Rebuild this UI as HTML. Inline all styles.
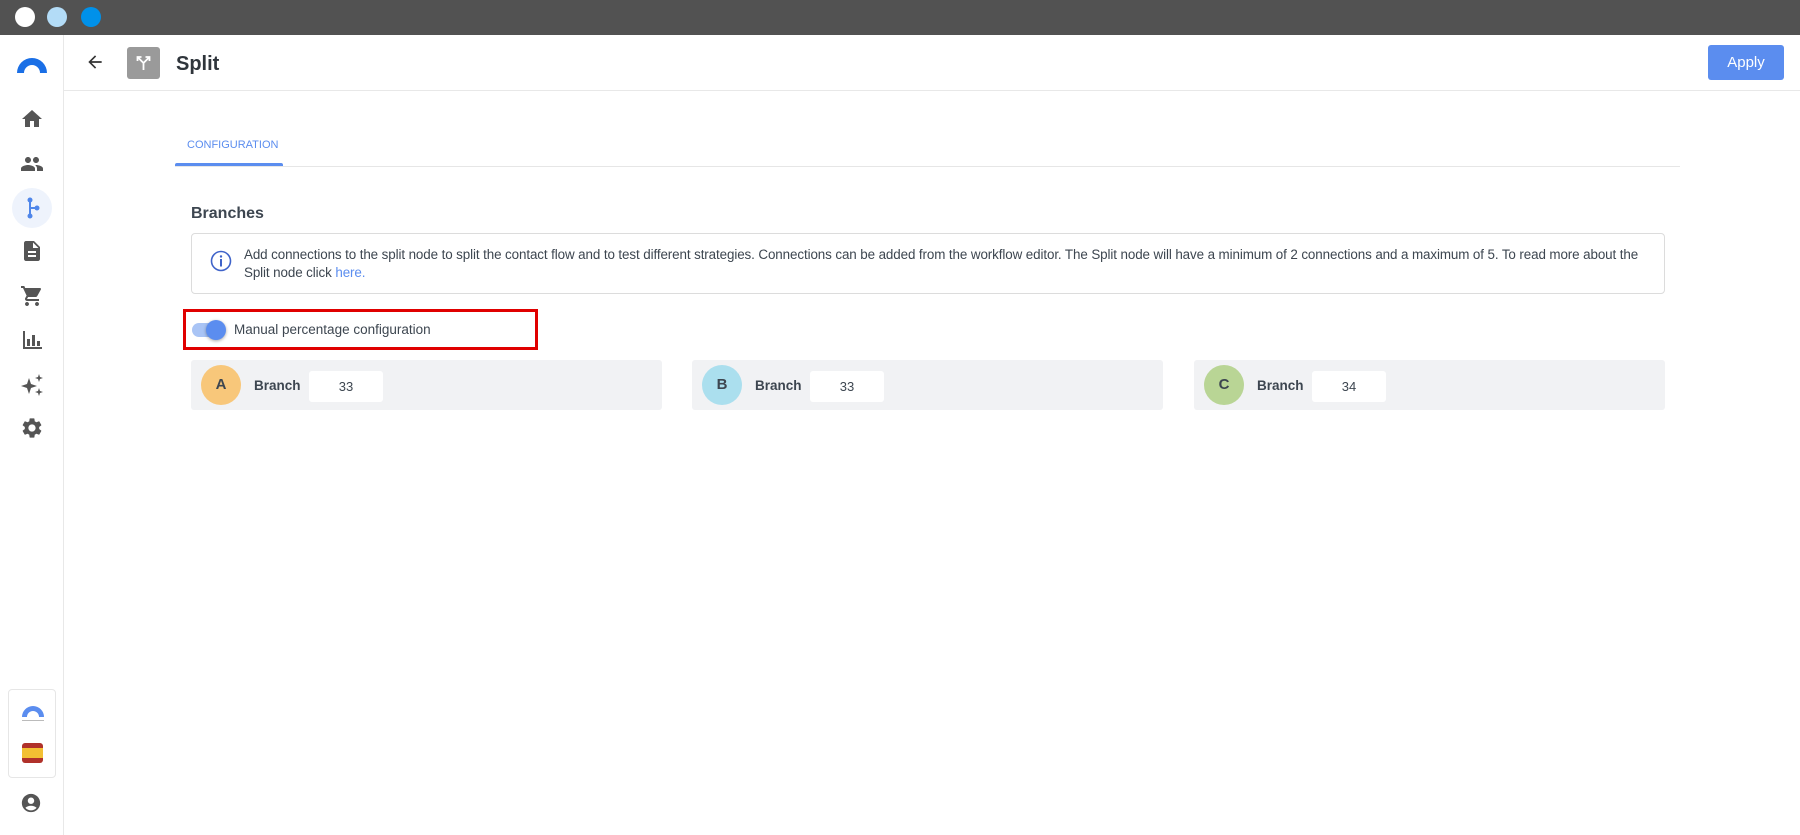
<!DOCTYPE html>
<html><head><meta charset="utf-8"><style>
*{margin:0;padding:0;box-sizing:border-box}
body{width:1800px;height:835px;overflow:hidden;background:#fff;font-family:"Liberation Sans",sans-serif;color:#3d4650;position:relative}
.top{position:absolute;left:0;top:0;width:1800px;height:35px;background:#525252}
.dot{position:absolute;top:7px;width:20px;height:20px;border-radius:50%}
.side{position:absolute;left:0;top:35px;width:64px;height:800px;border-right:1px solid #e8e8e8}
.hdr{position:absolute;left:64px;top:35px;right:0;height:56px;border-bottom:1px solid #e8e8e8}
.ic{position:absolute;left:20px;width:24px;height:24px}
.abs{position:absolute}
.card{position:absolute;top:360px;height:50px;width:471px;background:#f1f2f4;border-radius:3px}
.av{position:absolute;left:10px;top:5px;width:40px;height:40px;border-radius:50%;font-weight:bold;font-size:15px;text-align:center;line-height:40px;color:#3d4650}
.bl{position:absolute;left:63px;top:18px;font-size:13.5px;font-weight:bold}
.inp{position:absolute;left:118px;top:11px;width:74px;height:31px;background:#fff;border-radius:3px;text-align:center;line-height:31px;font-size:13px}
</style></head><body>
<div class="top">
<div class="dot" style="left:15px;background:#fff"></div>
<div class="dot" style="left:47px;background:#b3dcf7"></div>
<div class="dot" style="left:81px;background:#0091ea"></div>
</div>
<div class="side">
<svg class="abs" style="left:16px;top:20px" width="32" height="18" viewBox="0 0 32 18"><path d="M1 18A15 15 0 0 1 31 18H24A8 8 0 0 0 8 18Z" fill="#1a6fe6"/></svg>
<svg class="ic" style="top:72px" viewBox="0 0 24 24"><path d="M10 20v-6h4v6h5v-8h3L12 3 2 12h3v8z" fill="#555"/></svg>
<svg class="ic" style="top:117px" viewBox="0 0 24 24"><path d="M16 11c1.66 0 3-1.34 3-3s-1.34-3-3-3-3 1.340-3 3 1.34 3 3 3zm-8 0c1.66 0 3-1.34 3-3S9.66 5 8 5 5 6.34 5 8s1.34 3 3 3zm0 2c-2.33 0-7 1.17-7 3.5V19h14v-2.5c0-2.33-4.67-3.5-7-3.5zm8 0c-.29 0-.62.02-.97.05 1.16.84 1.970 1.97 1.97 3.45V19h6v-2.5c0-2.33-4.67-3.5-7-3.5z" fill="#555"/></svg>
<div class="abs" style="left:12px;top:153px;width:40px;height:40px;border-radius:50%;background:#eef3fc"></div>
<svg class="ic" style="top:161px" viewBox="0 0 24 24"><g fill="#4f86ea" stroke="#4f86ea" stroke-width="2"><line x1="10" y1="4" x2="10" y2="20"/><line x1="10" y1="12" x2="17" y2="12"/></g><circle cx="10" cy="4" r="2.5" fill="#4f86ea"/><circle cx="10" cy="20" r="2.5" fill="#4f86ea"/><circle cx="17" cy="12" r="2.5" fill="#4f86ea"/></svg>
<svg class="ic" style="top:204px" viewBox="0 0 24 24"><path d="M14 2H6c-1.1 0-2 .9-2 2v16c0 1.1.9 2 2 2h12c1.1 0 2-.9 2-2V8l-6-6zm2 16H8v-2h8v2zm0-4H8v-2h8v2zm-3-5V3.5L18.5 9H13z" fill="#555"/></svg>
<svg class="ic" style="top:249px" viewBox="0 0 24 24"><path d="M7 18c-1.1 0-2 .9-2 2s.9 2 2 2 2-.9 2-2-.9-2-2-2zM1 2v2h2l3.6 7.59-1.35 2.45C4.52 15.37 5.48 17 7 17h12v-2H7l1.1-2h7.45c.75 0 1.41-.41 1.750-1.03l3.58-6.49A1 1 0 0 0 20 4H5.21l-.94-2H1zm16 16c-1.1 0-2 .9-2 2s.9 2 2 2 2-.9 2-2-.9-2-2-2z" fill="#555"/></svg>
<svg class="ic" style="top:293px" viewBox="0 0 24 24"><path d="M3 3h2v16h17v2H3zM7 11h3v7H7zm5-4h3v11h-3zm5 6h3v5h-3z" fill="#555"/></svg>
<svg class="ic" style="top:338px" viewBox="0 0 24 24"><path d="M9 5l2 6 6 2-6 2-2 6-2-6-6-2 6-2zM19 1l1 3 3 1-3 1-1 3-1-3-3-1 3-1zM19 15l1 3 3 1-3 1-1 3-1-3-3-1 3-1z" fill="#555"/></svg>
<svg class="ic" style="top:381px" viewBox="0 0 24 24"><path d="M19.14 12.94c.04-.3.06-.61.06-.94 0-.32-.02-.64-.07-.94l2.03-1.58a.49.49 0 0 0 .12-.61l-1.92-3.32a.49.49 0 0 0-.59-.22l-2.39.96c-.5-.38-1.03-.7-1.62-.94l-.36-2.54a.48.48 0 0 0-.48-.41h-3.84c-.24 0-.43.17-.47.41l-.36 2.54c-.59.24-1.13.57-1.62.94l-2.39-.96a.48.48 0 0 0-.59.22L2.74 8.87c-.12.21-.08.47.12.61l2.03 1.58c-.05.3-.09.63-.09.94s.02.64.07.94l-2.03 1.58a.49.49 0 0 0-.12.61l1.92 3.32c.12.22.37.29.59.22l2.39-.96c.5.38 1.03.7 1.62.94l.36 2.54c.05.24.24.41.48.41h3.84c.24 0 .44-.17.47-.41l.36-2.54c.59-.24 1.13-.56 1.62-.94l2.39.96c.22.08.47 0 .59-.22l1.92-3.32c.12-.22.07-.47-.12-.61l-2.01-1.58zM12 15.6c-1.98 0-3.6-1.62-3.6-3.6s1.62-3.6 3.6-3.6 3.6 1.62 3.6 3.6-1.62 3.6-3.6 3.6z" fill="#555"/></svg>
<div class="abs" style="left:8px;top:654px;width:48px;height:89px;border:1px solid #e6e6e6;border-radius:4px">
<svg class="abs" style="left:13px;top:15px" width="22" height="12" viewBox="0 0 22 12"><path d="M0 12A11 11 0 0 1 22 12H17A6 6 0 0 0 5 12Z" fill="#5b8def"/></svg>
<div class="abs" style="left:13px;top:30px;width:22px;height:1px;background:#bbb"></div>
<div class="abs" style="left:13px;top:53px;width:21px;height:20px;border-radius:3px;background:linear-gradient(#b0312a 0 25%,#f3c033 25% 75%,#b0312a 75%)"></div>
</div>
<svg class="abs" style="left:20px;top:757px" width="22" height="22" viewBox="0 0 24 24"><path d="M12 2C6.48 2 2 6.48 2 12s4.48 10 10 10 10-4.480 10-10S17.52 2 12 2zm0 4c1.93 0 3.5 1.57 3.5 3.5S13.93 13 12 13s-3.5-1.57-3.5-3.5S10.07 6 12 6zm0 14c-2.03 0-4.43-.82-6.14-2.88a9.95 9.95 0 0 1 12.28 0C16.43 19.18 14.03 20 12 20z" fill="#555"/></svg>
</div>
<div class="hdr">
<svg class="abs" style="left:21px;top:17px" width="20" height="20" viewBox="0 0 24 24"><path d="M20 11H7.83l5.59-5.59L12 4l-8 8 8 8 1.41-1.41L7.83 13H20z" fill="#333"/></svg>
<div class="abs" style="left:63px;top:12px;width:33px;height:32px;background:#9a9a9a;border-radius:3px">
<svg class="abs" style="left:8px;top:7px" width="17" height="17" viewBox="0 0 17 17"><g stroke="#fff" stroke-width="1.8" fill="none"><path d="M8.5 16V9L3 3.5M8.5 9L14 3.5"/><path d="M2.5 7V3h4M14.5 7V3h-4"/></g></svg>
</div>
<div class="abs" style="left:112px;top:18px;font-size:20px;font-weight:bold;color:#2f353b">Split</div>
<div class="abs" style="left:1644px;top:10px;width:76px;height:35px;background:#5b8def;border-radius:3px;color:#fff;font-size:15px;text-align:center;line-height:35px">Apply</div>
</div>
<div class="abs" style="left:175px;top:166px;width:1505px;height:1px;background:#e6e6e6"></div>
<div class="abs" style="left:187px;top:139px;font-size:11px;color:#5b8def">CONFIGURATION</div>
<div class="abs" style="left:175px;top:163px;width:108px;height:3px;background:#5b8def;border-radius:2px 2px 0 0"></div>
<div class="abs" style="left:191px;top:205px;font-size:16px;font-weight:bold;color:#3d4650">Branches</div>
<div class="abs" style="left:191px;top:233px;width:1474px;height:61px;border:1px solid #dcdcdc;border-radius:4px">
<svg class="abs" style="left:18px;top:16px" width="22" height="22" viewBox="0 0 22 22"><circle cx="11" cy="11" r="9.5" fill="none" stroke="#3f63c9" stroke-width="1.6"/><circle cx="11" cy="6.5" r="1.2" fill="#3f63c9"/><rect x="10" y="9" width="2" height="7.5" fill="#3f63c9"/></svg>
<div class="abs" style="left:52px;top:12px;font-size:13.4px;line-height:18px;color:#3d4650;white-space:nowrap;letter-spacing:-0.1px">Add connections to the split node to split the contact flow and to test different strategies. Connections can be added from the workflow editor. The Split node will have a minimum of 2 connections and a maximum of 5. To read more about the<br>Split node click <span style="color:#5b8def">here.</span></div>
</div>
<div class="abs" style="left:183px;top:309px;width:355px;height:41px;border:3px solid #e00000"></div>
<div class="abs" style="left:192px;top:323px;width:32px;height:14px;border-radius:7px;background:#a9c4f5"></div>
<div class="abs" style="left:206px;top:320px;width:20px;height:20px;border-radius:50%;background:#5b8def;box-shadow:0 1px 3px rgba(0,0,0,.35)"></div>
<div class="abs" style="left:234px;top:322px;font-size:13.5px;color:#3d4650">Manual percentage configuration</div>
<div class="card" style="left:191px"><div class="av" style="background:#f8c77a">A</div><div class="bl">Branch</div><div class="inp">33</div></div>
<div class="card" style="left:692px"><div class="av" style="background:#abdfee">B</div><div class="bl">Branch</div><div class="inp">33</div></div>
<div class="card" style="left:1194px"><div class="av" style="background:#b9d595">C</div><div class="bl">Branch</div><div class="inp">34</div></div>
</body></html>
